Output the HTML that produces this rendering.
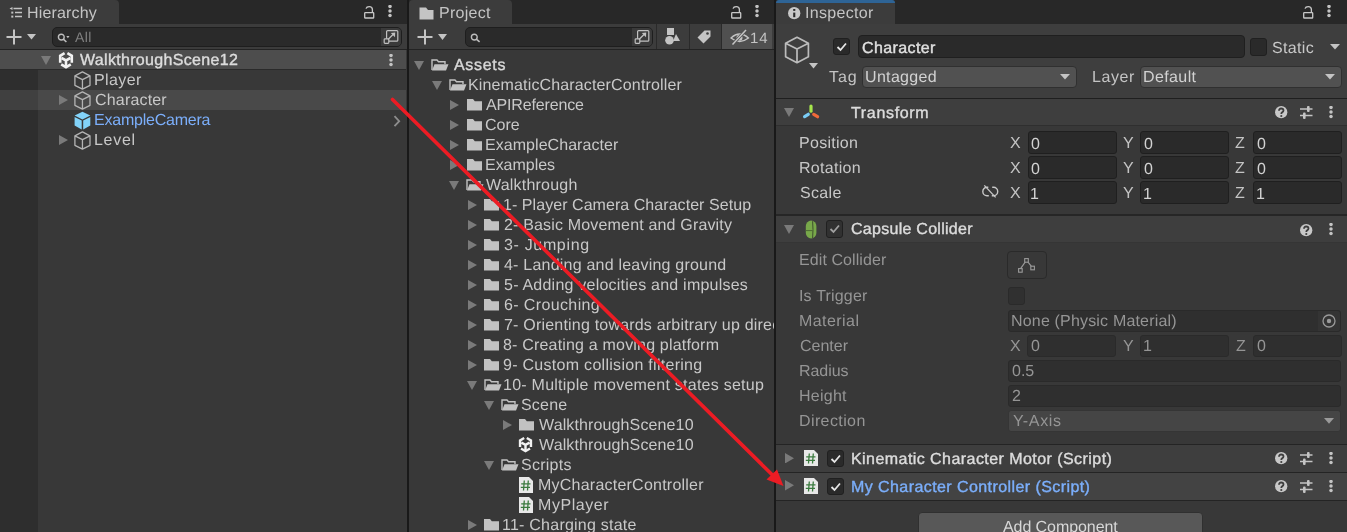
<!DOCTYPE html><html><head><meta charset="utf-8"><style>
html,body{margin:0;padding:0}
body{width:1347px;height:532px;overflow:hidden;position:relative;background:#191919;font-family:"Liberation Sans",sans-serif}
body div, body svg{position:absolute}
.t{white-space:pre;line-height:20px;font-size:16px;will-change:transform;text-rendering:geometricPrecision}
</style></head><body>
<div style="left:0px;top:0px;width:407px;height:24px;background:#282828;"></div>
<div style="left:0px;top:0px;width:119px;height:24px;background:#3c3c3c;border-top-right-radius:4px"></div>
<svg style="left:9px;top:7px;" width="14" height="11" viewBox="0 0 14 11"><path d="M4.5 1.5 H13 M6 5.5 H13 M6 9.5 H13" stroke="#c4c4c4" stroke-width="1.4"/><path d="M0.5 1.5 L3.5 0 V3 Z" fill="#c4c4c4"/><rect x="2.3" y="4.6" width="2" height="2" fill="#c4c4c4"/><rect x="2.3" y="8.6" width="2" height="2" fill="#c4c4c4"/></svg>
<div class="t" style="left:26.95px;top:3.9959999999999996px;color:#c4c4c4;font-size:16px;font-weight:400;letter-spacing:0.175px;">Hierarchy</div>
<svg style="left:363px;top:5px;" width="12" height="14" viewBox="0 0 12 14"><rect x="1.7" y="7.7" width="9" height="5.3" rx="0.6" fill="none" stroke="#c8c8c8" stroke-width="1.3"/><path d="M3 3.6 Q3.6 1.6 6.2 1.6 Q9.4 1.6 9.4 4.6 V7.7" fill="none" stroke="#c8c8c8" stroke-width="1.3"/></svg>
<svg style="left:387px;top:5px;" width="6" height="14" viewBox="0 0 6 14"><circle cx="3" cy="1.5" r="1.75" fill="#c4c4c4"/><circle cx="3" cy="6" r="1.75" fill="#c4c4c4"/><circle cx="3" cy="10.5" r="1.75" fill="#c4c4c4"/></svg>
<div style="left:0px;top:24px;width:407px;height:25px;background:#3c3c3c;"></div>
<div style="left:0px;top:49px;width:407px;height:1px;background:#232323;"></div>
<svg style="left:6px;top:29px;" width="16" height="16" viewBox="0 0 16 16"><path d="M8 0.5 V15.5 M0.5 8 H15.5" stroke="#c4c4c4" stroke-width="2"/></svg>
<svg style="left:27px;top:34px;" width="9" height="5.5" viewBox="0 0 9 5.5"><path d="M0 0 H9 L4.5 5.5 Z" fill="#c4c4c4"/></svg>
<div style="left:52px;top:27px;width:348px;height:18px;background:#2a2a2a;border:1px solid #1e1e1e;border-radius:5px"></div>
<div style="left:380.5px;top:28px;width:20.5px;height:18px;background:#3a3a3a;border-radius:0 4px 4px 0"></div>
<svg style="left:57px;top:31px;" width="14" height="13" viewBox="0 0 14 13"><circle cx="4.3" cy="6.1" r="2.9" stroke="#bdbdbd" stroke-width="1.4" fill="none"/><path d="M6.3 8.2 L9.4 11" stroke="#bdbdbd" stroke-width="1.6"/><path d="M9.3 5 H12.5 L10.9 7.2 Z" fill="#bdbdbd"/></svg>
<div class="t" style="left:75.20px;top:26.689px;color:#7f7f7f;font-size:14px;font-weight:400;letter-spacing:0.375px;">All</div>
<svg style="left:383px;top:29px;" width="17" height="16" viewBox="0 0 17 16"><rect x="3.6" y="1.6" width="11.2" height="10.6" rx="1" stroke="#c0c0c0" stroke-width="1.2" fill="none"/><rect x="1.2" y="9.8" width="4.6" height="4.6" rx="0.8" stroke="#c0c0c0" stroke-width="1.2" fill="#3b3b3b"/><path d="M5 10.5 L10 5.5" stroke="#c0c0c0" stroke-width="1.3"/><path d="M12.2 3.6 L12 8.2 L7.8 4 Z" fill="#c0c0c0"/></svg>
<div style="left:0px;top:50px;width:407px;height:482px;background:#383838;"></div>
<div style="left:0px;top:50px;width:38px;height:482px;background:#2e2e2e;"></div>
<div style="left:0px;top:50px;width:406px;height:19px;background:#4d4d4d;"></div>
<div style="left:0px;top:69px;width:406px;height:1px;background:#2a2a2a;"></div>
<svg style="left:41px;top:56px;" width="10" height="9" viewBox="0 0 10 9"><path d="M0 0 H10 L5.0 9 Z" fill="#7a7a7a"/></svg>
<svg style="left:57.5px;top:51px;" width="16" height="18" viewBox="0 0 16 18"><g transform="scale(1.0)" fill="none" stroke="#f2f2f2" stroke-width="2.6" stroke-linejoin="miter"><path d="M6.6 2.2 L2.2 4.8 V11.8"/><path d="M9.4 2.2 L13.8 4.8 V11.8"/><path d="M3.6 7 L8 9.4 L12.4 7 M8 9.4 V15"/><path d="M3.2 13.4 L8 16.2 L12.8 13.4"/></g></svg>
<div class="t" style="left:79.65px;top:50.996px;color:#dcdcdc;font-size:16px;font-weight:400;letter-spacing:0.318px;-webkit-text-stroke:0.4px #dcdcdc;">WalkthroughScene12</div>
<svg style="left:388px;top:54px;" width="6" height="14" viewBox="0 0 6 14"><circle cx="3" cy="1.5" r="1.75" fill="#c4c4c4"/><circle cx="3" cy="6" r="1.75" fill="#c4c4c4"/><circle cx="3" cy="10.5" r="1.75" fill="#c4c4c4"/></svg>
<div style="left:0px;top:90px;width:406px;height:20px;background:rgba(255,255,255,0.085);"></div>
<svg style="left:73.5px;top:70.5px;" width="17" height="19" viewBox="0 0 17 19"><path d="M8.45 0.9 L16 4.8 V14.3 L8.45 18.2 L0.9 14.3 V4.8 Z M0.9 4.8 L8.45 8.7 L16 4.8 M8.45 8.7 V18.2" stroke="#b4b4b4" stroke-width="1.3" fill="none" stroke-linejoin="round"/></svg>
<div class="t" style="left:94.05px;top:70.99600000000001px;color:#c8c8c8;font-size:16px;font-weight:400;letter-spacing:0.390px;">Player</div>
<svg style="left:59px;top:95px;" width="9" height="10" viewBox="0 0 9 10"><path d="M0 0 V10 L9 5.0 Z" fill="#7a7a7a"/></svg>
<svg style="left:73.5px;top:90.5px;" width="17" height="19" viewBox="0 0 17 19"><path d="M8.45 0.9 L16 4.8 V14.3 L8.45 18.2 L0.9 14.3 V4.8 Z M0.9 4.8 L8.45 8.7 L16 4.8 M8.45 8.7 V18.2" stroke="#b4b4b4" stroke-width="1.3" fill="none" stroke-linejoin="round"/></svg>
<div class="t" style="left:94.55px;top:90.99600000000001px;color:#c8c8c8;font-size:16px;font-weight:400;letter-spacing:0.181px;">Character</div>
<svg style="left:73.5px;top:110.5px;" width="17" height="19" viewBox="0 0 17 19"><path d="M8.45 0.7 L16.3 4.6 L8.45 8.5 L0.6 4.6 Z M0.6 5.9 L7.7 9.6 V18.6 L0.6 14.6 Z M9.2 9.6 L16.3 5.9 V14.6 L9.2 18.6 Z" fill="#82d3f9"/></svg>
<div class="t" style="left:94.05px;top:110.99600000000001px;color:#7baefa;font-size:16px;font-weight:400;letter-spacing:-0.225px;">ExampleCamera</div>
<svg style="left:393px;top:114.5px;" width="8" height="13" viewBox="0 0 8 13"><path d="M1.5 1.2 L6.2 6.2 L1.5 11.2" stroke="#8e8e8e" stroke-width="1.8" fill="none"/></svg>
<svg style="left:59px;top:135px;" width="9" height="10" viewBox="0 0 9 10"><path d="M0 0 V10 L9 5.0 Z" fill="#7a7a7a"/></svg>
<svg style="left:73.5px;top:130.5px;" width="17" height="19" viewBox="0 0 17 19"><path d="M8.45 0.9 L16 4.8 V14.3 L8.45 18.2 L0.9 14.3 V4.8 Z M0.9 4.8 L8.45 8.7 L16 4.8 M8.45 8.7 V18.2" stroke="#b4b4b4" stroke-width="1.3" fill="none" stroke-linejoin="round"/></svg>
<div class="t" style="left:94.15px;top:130.99599999999998px;color:#c8c8c8;font-size:16px;font-weight:400;letter-spacing:0.725px;">Level</div>
<div style="left:409px;top:0px;width:365px;height:24px;background:#282828;"></div>
<div style="left:409px;top:0px;width:103px;height:24px;background:#3c3c3c;border-top-left-radius:4px;border-top-right-radius:4px"></div>
<svg style="left:419px;top:6.5px;" width="15" height="13" viewBox="0 0 15 13"><path d="M0.5 0.5 H7 L9 3 H14.5 V12.5 H0.5 Z" fill="#c4c4c4"/></svg>
<div class="t" style="left:438.55px;top:3.9959999999999996px;color:#c4c4c4;font-size:16px;font-weight:400;letter-spacing:0.283px;">Project</div>
<svg style="left:730px;top:5px;" width="12" height="14" viewBox="0 0 12 14"><rect x="1.7" y="7.7" width="9" height="5.3" rx="0.6" fill="none" stroke="#c8c8c8" stroke-width="1.3"/><path d="M3 3.6 Q3.6 1.6 6.2 1.6 Q9.4 1.6 9.4 4.6 V7.7" fill="none" stroke="#c8c8c8" stroke-width="1.3"/></svg>
<svg style="left:754px;top:5px;" width="6" height="14" viewBox="0 0 6 14"><circle cx="3" cy="1.5" r="1.75" fill="#c4c4c4"/><circle cx="3" cy="6" r="1.75" fill="#c4c4c4"/><circle cx="3" cy="10.5" r="1.75" fill="#c4c4c4"/></svg>
<div style="left:409px;top:24px;width:365px;height:25px;background:#3c3c3c;"></div>
<div style="left:409px;top:49px;width:365px;height:1px;background:#232323;"></div>
<svg style="left:417px;top:29px;" width="16" height="16" viewBox="0 0 16 16"><path d="M8 0.5 V15.5 M0.5 8 H15.5" stroke="#c4c4c4" stroke-width="2"/></svg>
<svg style="left:438px;top:34px;" width="9" height="6" viewBox="0 0 9 6"><path d="M0 0 H9 L4.5 6 Z" fill="#c4c4c4"/></svg>
<div style="left:465px;top:27px;width:186px;height:18px;background:#2a2a2a;border:1px solid #1e1e1e;border-radius:5px"></div>
<div style="left:631.5px;top:28px;width:20.5px;height:18px;background:#3a3a3a;border-radius:0 4px 4px 0"></div>
<svg style="left:470px;top:31px;" width="12" height="13" viewBox="0 0 12 13"><circle cx="4.3" cy="6.1" r="2.9" stroke="#bdbdbd" stroke-width="1.4" fill="none"/><path d="M6.3 8.2 L9.6 10.9" stroke="#bdbdbd" stroke-width="1.6"/></svg>
<svg style="left:634px;top:29px;" width="17" height="16" viewBox="0 0 17 16"><rect x="3.6" y="1.6" width="11.2" height="10.6" rx="1" stroke="#c0c0c0" stroke-width="1.2" fill="none"/><rect x="1.2" y="9.8" width="4.6" height="4.6" rx="0.8" stroke="#c0c0c0" stroke-width="1.2" fill="#3b3b3b"/><path d="M5 10.5 L10 5.5" stroke="#c0c0c0" stroke-width="1.3"/><path d="M12.2 3.6 L12 8.2 L7.8 4 Z" fill="#c0c0c0"/></svg>
<div style="left:656px;top:24px;width:1px;height:25px;background:#2a2a2a;"></div>
<svg style="left:665px;top:28px;" width="16" height="17" viewBox="0 0 16 17"><rect x="2" y="0" width="7" height="7" fill="#c4c4c4"/><circle cx="4.5" cy="12.2" r="4.3" fill="#c4c4c4"/><path d="M11 6 L15 13 H8 Z" fill="#c4c4c4"/></svg>
<div style="left:689px;top:24px;width:1px;height:25px;background:#2a2a2a;"></div>
<svg style="left:697px;top:30px;" width="14" height="14" viewBox="0 0 14 14"><path d="M7.5 0.5 H13.5 V6.5 L6.5 13.5 L0.5 7.5 Z" fill="#c4c4c4"/><circle cx="10.5" cy="3.5" r="1.3" fill="#3c3c3c"/></svg>
<div style="left:721px;top:24px;width:1px;height:25px;background:#2a2a2a;"></div>
<div style="left:722px;top:24px;width:50px;height:25px;background:#505050;"></div>
<svg style="left:729.5px;top:28.5px;" width="20" height="16" viewBox="0 0 20 16"><path d="M1 9 Q9.5 1 18.5 9 Q9.5 16 1 9 Z" stroke="#c4c4c4" stroke-width="1.3" fill="none"/><circle cx="9.5" cy="8.7" r="3" fill="#c4c4c4"/><path d="M2.5 15.5 L16 1" stroke="#505050" stroke-width="3"/><path d="M2.5 15.5 L16 1" stroke="#c4c4c4" stroke-width="1.5"/></svg>
<div class="t" style="left:749.75px;top:29.342499999999998px;color:#c4c4c4;font-size:15px;font-weight:400;letter-spacing:0.800px;">14</div>
<div style="left:409px;top:50px;width:365px;height:482px;background:#383838;"></div>
<div style="left:409px;top:50px;width:365px;height:482px;overflow:hidden">
<svg style="left:5.0px;top:11px;" width="10" height="9" viewBox="0 0 10 9"><path d="M0 0 H10 L5 9 Z" fill="#7a7a7a"/></svg>
<svg style="left:22.0px;top:9px;" width="18" height="12" viewBox="0 0 18 12"><path d="M1 11 V1 H6 L7.5 2.7 H14 V5" fill="none" stroke="#c2c2c2" stroke-width="1.4"/><path d="M1 11.5 L3.5 5.2 H17.5 L15 11.5 Z" fill="#c2c2c2"/></svg>
<div class="t" style="left:44.95px;top:5.9959999999999996px;color:#d8d8d8;font-size:16px;font-weight:400;letter-spacing:0.690px;-webkit-text-stroke:0.4px #d8d8d8;">Assets</div>
<svg style="left:22.600000000000023px;top:31px;" width="10" height="9" viewBox="0 0 10 9"><path d="M0 0 H10 L5 9 Z" fill="#7a7a7a"/></svg>
<svg style="left:39.60000000000002px;top:29px;" width="18" height="12" viewBox="0 0 18 12"><path d="M1 11 V1 H6 L7.5 2.7 H14 V5" fill="none" stroke="#c2c2c2" stroke-width="1.4"/><path d="M1 11.5 L3.5 5.2 H17.5 L15 11.5 Z" fill="#c2c2c2"/></svg>
<div class="t" style="left:59.45px;top:25.996px;color:#c8c8c8;font-size:16px;font-weight:400;letter-spacing:0.144px;">KinematicCharacterController</div>
<svg style="left:41.19999999999999px;top:49.8px;" width="9" height="10" viewBox="0 0 9 10"><path d="M0 0 V10 L9 5 Z" fill="#7a7a7a"/></svg>
<svg style="left:57.599999999999966px;top:48.9px;" width="15" height="12" viewBox="0 0 15 12"><path d="M0 0 H6 L7.8 2.3 H15 V11.5 H0 Z" fill="#c2c2c2"/></svg>
<div class="t" style="left:77.10px;top:45.996px;color:#c8c8c8;font-size:16px;font-weight:400;letter-spacing:-0.155px;">APIReference</div>
<svg style="left:41.19999999999999px;top:69.8px;" width="9" height="10" viewBox="0 0 9 10"><path d="M0 0 V10 L9 5 Z" fill="#7a7a7a"/></svg>
<svg style="left:57.599999999999966px;top:68.9px;" width="15" height="12" viewBox="0 0 15 12"><path d="M0 0 H6 L7.8 2.3 H15 V11.5 H0 Z" fill="#c2c2c2"/></svg>
<div class="t" style="left:76.35px;top:65.99600000000001px;color:#c8c8c8;font-size:16px;font-weight:400;letter-spacing:0.017px;">Core</div>
<svg style="left:41.19999999999999px;top:89.8px;" width="9" height="10" viewBox="0 0 9 10"><path d="M0 0 V10 L9 5 Z" fill="#7a7a7a"/></svg>
<svg style="left:57.599999999999966px;top:88.9px;" width="15" height="12" viewBox="0 0 15 12"><path d="M0 0 H6 L7.8 2.3 H15 V11.5 H0 Z" fill="#c2c2c2"/></svg>
<div class="t" style="left:75.85px;top:85.99600000000001px;color:#c8c8c8;font-size:16px;font-weight:400;letter-spacing:0.047px;">ExampleCharacter</div>
<svg style="left:41.19999999999999px;top:109.8px;" width="9" height="10" viewBox="0 0 9 10"><path d="M0 0 V10 L9 5 Z" fill="#7a7a7a"/></svg>
<svg style="left:57.599999999999966px;top:108.9px;" width="15" height="12" viewBox="0 0 15 12"><path d="M0 0 H6 L7.8 2.3 H15 V11.5 H0 Z" fill="#c2c2c2"/></svg>
<div class="t" style="left:75.85px;top:105.99600000000001px;color:#c8c8c8;font-size:16px;font-weight:400;letter-spacing:-0.029px;">Examples</div>
<svg style="left:40.19999999999999px;top:131px;" width="10" height="9" viewBox="0 0 10 9"><path d="M0 0 H10 L5 9 Z" fill="#7a7a7a"/></svg>
<svg style="left:57.19999999999999px;top:129px;" width="18" height="12" viewBox="0 0 18 12"><path d="M1 11 V1 H6 L7.5 2.7 H14 V5" fill="none" stroke="#c2c2c2" stroke-width="1.4"/><path d="M1 11.5 L3.5 5.2 H17.5 L15 11.5 Z" fill="#c2c2c2"/></svg>
<div class="t" style="left:77.10px;top:125.99600000000001px;color:#c8c8c8;font-size:16px;font-weight:400;letter-spacing:0.205px;">Walkthrough</div>
<svg style="left:58.69999999999999px;top:149.8px;" width="9" height="10" viewBox="0 0 9 10"><path d="M0 0 V10 L9 5 Z" fill="#7a7a7a"/></svg>
<svg style="left:74.94999999999999px;top:148.9px;" width="15" height="12" viewBox="0 0 15 12"><path d="M0 0 H6 L7.8 2.3 H15 V11.5 H0 Z" fill="#c2c2c2"/></svg>
<div class="t" style="left:94.25px;top:145.99599999999998px;color:#c8c8c8;font-size:16px;font-weight:400;letter-spacing:0.055px;">1- Player Camera Character Setup</div>
<svg style="left:58.69999999999999px;top:169.8px;" width="9" height="10" viewBox="0 0 9 10"><path d="M0 0 V10 L9 5 Z" fill="#7a7a7a"/></svg>
<svg style="left:74.94999999999999px;top:168.9px;" width="15" height="12" viewBox="0 0 15 12"><path d="M0 0 H6 L7.8 2.3 H15 V11.5 H0 Z" fill="#c2c2c2"/></svg>
<div class="t" style="left:94.75px;top:165.99599999999998px;color:#c8c8c8;font-size:16px;font-weight:400;letter-spacing:0.170px;">2- Basic Movement and Gravity</div>
<svg style="left:58.69999999999999px;top:189.8px;" width="9" height="10" viewBox="0 0 9 10"><path d="M0 0 V10 L9 5 Z" fill="#7a7a7a"/></svg>
<svg style="left:74.94999999999999px;top:188.9px;" width="15" height="12" viewBox="0 0 15 12"><path d="M0 0 H6 L7.8 2.3 H15 V11.5 H0 Z" fill="#c2c2c2"/></svg>
<div class="t" style="left:94.75px;top:185.99599999999998px;color:#c8c8c8;font-size:16px;font-weight:400;letter-spacing:0.661px;">3- Jumping</div>
<svg style="left:58.69999999999999px;top:209.8px;" width="9" height="10" viewBox="0 0 9 10"><path d="M0 0 V10 L9 5 Z" fill="#7a7a7a"/></svg>
<svg style="left:74.94999999999999px;top:208.9px;" width="15" height="12" viewBox="0 0 15 12"><path d="M0 0 H6 L7.8 2.3 H15 V11.5 H0 Z" fill="#c2c2c2"/></svg>
<div class="t" style="left:95.25px;top:205.99599999999998px;color:#c8c8c8;font-size:16px;font-weight:400;letter-spacing:0.216px;">4- Landing and leaving ground</div>
<svg style="left:58.69999999999999px;top:229.8px;" width="9" height="10" viewBox="0 0 9 10"><path d="M0 0 V10 L9 5 Z" fill="#7a7a7a"/></svg>
<svg style="left:74.94999999999999px;top:228.9px;" width="15" height="12" viewBox="0 0 15 12"><path d="M0 0 H6 L7.8 2.3 H15 V11.5 H0 Z" fill="#c2c2c2"/></svg>
<div class="t" style="left:94.75px;top:225.99599999999998px;color:#c8c8c8;font-size:16px;font-weight:400;letter-spacing:0.227px;">5- Adding velocities and impulses</div>
<svg style="left:58.69999999999999px;top:249.8px;" width="9" height="10" viewBox="0 0 9 10"><path d="M0 0 V10 L9 5 Z" fill="#7a7a7a"/></svg>
<svg style="left:74.94999999999999px;top:248.9px;" width="15" height="12" viewBox="0 0 15 12"><path d="M0 0 H6 L7.8 2.3 H15 V11.5 H0 Z" fill="#c2c2c2"/></svg>
<div class="t" style="left:94.75px;top:245.99599999999998px;color:#c8c8c8;font-size:16px;font-weight:400;letter-spacing:0.377px;">6- Crouching</div>
<svg style="left:58.69999999999999px;top:269.8px;" width="9" height="10" viewBox="0 0 9 10"><path d="M0 0 V10 L9 5 Z" fill="#7a7a7a"/></svg>
<svg style="left:74.94999999999999px;top:268.9px;" width="15" height="12" viewBox="0 0 15 12"><path d="M0 0 H6 L7.8 2.3 H15 V11.5 H0 Z" fill="#c2c2c2"/></svg>
<div class="t" style="left:94.75px;top:265.99600000000004px;color:#c8c8c8;font-size:16px;font-weight:400;letter-spacing:0.200px;">7- Orienting towards arbitrary up direction</div>
<svg style="left:58.69999999999999px;top:289.8px;" width="9" height="10" viewBox="0 0 9 10"><path d="M0 0 V10 L9 5 Z" fill="#7a7a7a"/></svg>
<svg style="left:74.94999999999999px;top:288.9px;" width="15" height="12" viewBox="0 0 15 12"><path d="M0 0 H6 L7.8 2.3 H15 V11.5 H0 Z" fill="#c2c2c2"/></svg>
<div class="t" style="left:94.45px;top:285.99600000000004px;color:#c8c8c8;font-size:16px;font-weight:400;letter-spacing:0.186px;">8- Creating a moving platform</div>
<svg style="left:58.69999999999999px;top:309.8px;" width="9" height="10" viewBox="0 0 9 10"><path d="M0 0 V10 L9 5 Z" fill="#7a7a7a"/></svg>
<svg style="left:74.94999999999999px;top:308.9px;" width="15" height="12" viewBox="0 0 15 12"><path d="M0 0 H6 L7.8 2.3 H15 V11.5 H0 Z" fill="#c2c2c2"/></svg>
<div class="t" style="left:94.45px;top:305.99600000000004px;color:#c8c8c8;font-size:16px;font-weight:400;letter-spacing:0.286px;">9- Custom collision filtering</div>
<svg style="left:57.80000000000001px;top:331px;" width="10" height="9" viewBox="0 0 10 9"><path d="M0 0 H10 L5 9 Z" fill="#7a7a7a"/></svg>
<svg style="left:74.80000000000001px;top:329px;" width="18" height="12" viewBox="0 0 18 12"><path d="M1 11 V1 H6 L7.5 2.7 H14 V5" fill="none" stroke="#c2c2c2" stroke-width="1.4"/><path d="M1 11.5 L3.5 5.2 H17.5 L15 11.5 Z" fill="#c2c2c2"/></svg>
<div class="t" style="left:93.95px;top:325.99600000000004px;color:#c8c8c8;font-size:16px;font-weight:400;letter-spacing:0.250px;">10- Multiple movement states setup</div>
<svg style="left:75.39999999999998px;top:351px;" width="10" height="9" viewBox="0 0 10 9"><path d="M0 0 H10 L5 9 Z" fill="#7a7a7a"/></svg>
<svg style="left:92.39999999999998px;top:349px;" width="18" height="12" viewBox="0 0 18 12"><path d="M1 11 V1 H6 L7.5 2.7 H14 V5" fill="none" stroke="#c2c2c2" stroke-width="1.4"/><path d="M1 11.5 L3.5 5.2 H17.5 L15 11.5 Z" fill="#c2c2c2"/></svg>
<div class="t" style="left:111.55px;top:345.99600000000004px;color:#c8c8c8;font-size:16px;font-weight:400;letter-spacing:0.200px;">Scene</div>
<svg style="left:93.69999999999999px;top:369.8px;" width="9" height="10" viewBox="0 0 9 10"><path d="M0 0 V10 L9 5 Z" fill="#7a7a7a"/></svg>
<svg style="left:109.64999999999998px;top:368.9px;" width="15" height="12" viewBox="0 0 15 12"><path d="M0 0 H6 L7.8 2.3 H15 V11.5 H0 Z" fill="#c2c2c2"/></svg>
<div class="t" style="left:130.10px;top:365.99600000000004px;color:#c8c8c8;font-size:16px;font-weight:400;letter-spacing:0.126px;">WalkthroughScene10</div>
<svg style="left:109.14999999999998px;top:386.2px;" width="15" height="17" viewBox="0 0 15 17"><g transform="scale(0.9375)" fill="none" stroke="#f2f2f2" stroke-width="2.6" stroke-linejoin="miter"><path d="M6.6 2.2 L2.2 4.8 V11.8"/><path d="M9.4 2.2 L13.8 4.8 V11.8"/><path d="M3.6 7 L8 9.4 L12.4 7 M8 9.4 V15"/><path d="M3.2 13.4 L8 16.2 L12.8 13.4"/></g></svg>
<div class="t" style="left:130.10px;top:385.99600000000004px;color:#c8c8c8;font-size:16px;font-weight:400;letter-spacing:0.126px;">WalkthroughScene10</div>
<svg style="left:75.39999999999998px;top:411px;" width="10" height="9" viewBox="0 0 10 9"><path d="M0 0 H10 L5 9 Z" fill="#7a7a7a"/></svg>
<svg style="left:92.39999999999998px;top:409px;" width="18" height="12" viewBox="0 0 18 12"><path d="M1 11 V1 H6 L7.5 2.7 H14 V5" fill="none" stroke="#c2c2c2" stroke-width="1.4"/><path d="M1 11.5 L3.5 5.2 H17.5 L15 11.5 Z" fill="#c2c2c2"/></svg>
<div class="t" style="left:111.55px;top:405.99600000000004px;color:#c8c8c8;font-size:16px;font-weight:400;letter-spacing:0.250px;">Scripts</div>
<svg style="left:108.64999999999998px;top:425.5px;" width="16" height="18" viewBox="0 0 16 18"><path d="M1 1 H11 L15 5 V17 H1 Z" fill="#e8e8e8"/><path d="M6.3 4.5 L5.5 14.5 M10.3 4.5 L9.5 14.5 M3.2 7.8 H12.5 M2.8 11.3 H12" stroke="#3a7a3e" stroke-width="1.3"/></svg>
<div class="t" style="left:128.85px;top:425.99600000000004px;color:#c8c8c8;font-size:16px;font-weight:400;letter-spacing:0.230px;">MyCharacterController</div>
<svg style="left:108.64999999999998px;top:445.5px;" width="16" height="18" viewBox="0 0 16 18"><path d="M1 1 H11 L15 5 V17 H1 Z" fill="#e8e8e8"/><path d="M6.3 4.5 L5.5 14.5 M10.3 4.5 L9.5 14.5 M3.2 7.8 H12.5 M2.8 11.3 H12" stroke="#3a7a3e" stroke-width="1.3"/></svg>
<div class="t" style="left:128.85px;top:445.99600000000004px;color:#c8c8c8;font-size:16px;font-weight:400;letter-spacing:0.564px;">MyPlayer</div>
<svg style="left:58.69999999999999px;top:469.8px;" width="9" height="10" viewBox="0 0 9 10"><path d="M0 0 V10 L9 5 Z" fill="#7a7a7a"/></svg>
<svg style="left:74.94999999999999px;top:468.9px;" width="15" height="12" viewBox="0 0 15 12"><path d="M0 0 H6 L7.8 2.3 H15 V11.5 H0 Z" fill="#c2c2c2"/></svg>
<div class="t" style="left:93.25px;top:465.99600000000004px;color:#c8c8c8;font-size:16px;font-weight:400;letter-spacing:0.235px;">11- Charging state</div>
</div>
<div style="left:776px;top:0px;width:571px;height:24px;background:#282828;"></div>
<div style="left:776px;top:0px;width:119px;height:24px;background:#3c3c3c;border-top-left-radius:4px;border-top-right-radius:4px;overflow:hidden"></div>
<div style="left:776px;top:0px;width:119px;height:3px;background:#2e6496;border-top-left-radius:4px;border-top-right-radius:4px"></div>
<svg style="left:787.5px;top:6.5px;" width="13" height="13" viewBox="0 0 13 13"><circle cx="6.2" cy="6.2" r="6.15" fill="#c8c8c8"/><rect x="5.2" y="2" width="2.1" height="1.9" fill="#2a2a2a"/><rect x="5.2" y="5.6" width="2.1" height="4.6" fill="#2a2a2a"/></svg>
<div class="t" style="left:804.80px;top:3.9959999999999996px;color:#c4c4c4;font-size:16px;font-weight:400;letter-spacing:0.325px;">Inspector</div>
<svg style="left:1302px;top:5px;" width="12" height="14" viewBox="0 0 12 14"><rect x="1.7" y="7.7" width="9" height="5.3" rx="0.6" fill="none" stroke="#c8c8c8" stroke-width="1.3"/><path d="M3 3.6 Q3.6 1.6 6.2 1.6 Q9.4 1.6 9.4 4.6 V7.7" fill="none" stroke="#c8c8c8" stroke-width="1.3"/></svg>
<svg style="left:1326px;top:5px;" width="6" height="14" viewBox="0 0 6 14"><circle cx="3" cy="1.5" r="1.75" fill="#c4c4c4"/><circle cx="3" cy="6" r="1.75" fill="#c4c4c4"/><circle cx="3" cy="10.5" r="1.75" fill="#c4c4c4"/></svg>
<div style="left:776px;top:24px;width:571px;height:74px;background:#3e3e3e;"></div>
<div style="left:776px;top:98px;width:571px;height:1px;background:#1f1f1f;"></div>
<svg style="left:784px;top:36px;" width="27" height="28" viewBox="0 0 27 28"><path d="M13 1.3 L24.4 7.2 V20.8 L13 26.7 L1.6 20.8 V7.2 Z M1.6 7.2 L13 13.1 L24.4 7.2 M13 13.1 V26.7" stroke="#bcbcbc" stroke-width="1.7" fill="none" stroke-linejoin="round"/></svg>
<svg style="left:809px;top:63px;" width="9" height="5.5" viewBox="0 0 9 5.5"><path d="M0 0 H9 L4.5 5.5 Z" fill="#c4c4c4"/></svg>
<div style="left:833px;top:38px;width:15px;height:15px;background:#2a2a2a;border:1px solid #202020;border-radius:3px"></div>
<svg style="left:836px;top:41px;" width="11" height="11" viewBox="0 0 11 11"><path d="M1.5 6 L4.5 9 L10 2.5" stroke="#e6e6e6" stroke-width="1.8" fill="none"/></svg>
<div style="left:858px;top:35px;width:384.5px;height:21px;background:#2a2a2a;border:1px solid #1f1f1f;border-radius:4px"></div>
<div class="t" style="left:861.90px;top:38.996px;color:#e0e0e0;font-size:16px;font-weight:400;letter-spacing:0.394px;-webkit-text-stroke:0.4px #e0e0e0;">Character</div>
<div style="left:1250px;top:38px;width:15px;height:16px;background:#2a2a2a;border:1px solid #202020;border-radius:3px"></div>
<div class="t" style="left:1271.55px;top:38.996px;color:#c8c8c8;font-size:16px;font-weight:400;letter-spacing:0.350px;">Static</div>
<svg style="left:1329.5px;top:44px;" width="10" height="5.5" viewBox="0 0 10 5.5"><path d="M0 0 H10 L5.0 5.5 Z" fill="#c4c4c4"/></svg>
<div class="t" style="left:828.75px;top:67.99600000000001px;color:#c4c4c4;font-size:16px;font-weight:400;letter-spacing:0.900px;">Tag</div>
<div style="left:861.5px;top:65.5px;width:213.5px;height:20px;background:#515151;border:1px solid #303030;border-radius:4px"></div>
<div class="t" style="left:864.95px;top:67.99600000000001px;color:#d2d2d2;font-size:16px;font-weight:400;letter-spacing:0.329px;">Untagged</div>
<svg style="left:1060px;top:74px;" width="10" height="5.5" viewBox="0 0 10 5.5"><path d="M0 0 H10 L5.0 5.5 Z" fill="#c4c4c4"/></svg>
<div class="t" style="left:1091.75px;top:67.99600000000001px;color:#c4c4c4;font-size:16px;font-weight:400;letter-spacing:0.575px;">Layer</div>
<div style="left:1140px;top:65.5px;width:199.5px;height:20px;background:#515151;border:1px solid #303030;border-radius:4px"></div>
<div class="t" style="left:1143.15px;top:67.99600000000001px;color:#d2d2d2;font-size:16px;font-weight:400;letter-spacing:0.392px;">Default</div>
<svg style="left:1324.5px;top:74px;" width="10" height="5.5" viewBox="0 0 10 5.5"><path d="M0 0 H10 L5.0 5.5 Z" fill="#c4c4c4"/></svg>
<div style="left:776px;top:99px;width:571px;height:433px;background:#383838;"></div>
<div style="left:776px;top:99px;width:571px;height:26px;background:#3e3e3e;"></div>
<div style="left:776px;top:125px;width:571px;height:1px;background:#2f2f2f;"></div>
<svg style="left:784px;top:108px;" width="10" height="9" viewBox="0 0 10 9"><path d="M0 0 H10 L5.0 9 Z" fill="#7a7a7a"/></svg>
<svg style="left:802px;top:103px;" width="18" height="17" viewBox="0 0 18 17"><path d="M9 3 V8.2" stroke="#a6e64c" stroke-width="3.2" stroke-linecap="round"/><path d="M6.3 11.3 L2.6 13.6" stroke="#7accf5" stroke-width="3.2" stroke-linecap="round"/><path d="M11.7 11.4 L15.6 13.7" stroke="#f06a3a" stroke-width="3.2" stroke-linecap="round"/></svg>
<div class="t" style="left:851.35px;top:103.99600000000001px;color:#dcdcdc;font-size:16px;font-weight:400;letter-spacing:0.669px;-webkit-text-stroke:0.4px #dcdcdc;">Transform</div>
<svg style="left:1275px;top:106px;" width="13" height="13" viewBox="0 0 13 13"><circle cx="6.2" cy="6.2" r="6.15" fill="#c8c8c8"/><path d="M4 4.8 Q4 2.5 6.2 2.5 Q8.5 2.5 8.5 4.5 Q8.5 5.7 7.1 6.4 Q6.3 6.8 6.3 8" stroke="#3e3e3e" stroke-width="1.8" fill="none"/><circle cx="6.3" cy="10" r="1.1" fill="#3e3e3e"/></svg>
<svg style="left:1300px;top:106px;" width="13" height="13" viewBox="0 0 13 13"><path d="M0 3 H12.5 M0 9.5 H12.5" stroke="#c4c4c4" stroke-width="1.5"/><rect x="7" y="0" width="2.6" height="6" rx="1" fill="#c4c4c4"/><rect x="3" y="6.5" width="2.6" height="6.5" rx="1" fill="#c4c4c4"/></svg>
<svg style="left:1328px;top:105.5px;" width="6" height="14" viewBox="0 0 6 14"><circle cx="3" cy="1.5" r="1.75" fill="#c4c4c4"/><circle cx="3" cy="6" r="1.75" fill="#c4c4c4"/><circle cx="3" cy="10.5" r="1.75" fill="#c4c4c4"/></svg>
<div class="t" style="left:799.25px;top:133.99599999999998px;color:#c8c8c8;font-size:16px;font-weight:400;letter-spacing:0.286px;">Position</div>
<div class="t" style="left:1009.50px;top:133.99599999999998px;color:#c4c4c4;font-size:16px;font-weight:400;letter-spacing:0.000px;">X</div>
<div style="left:1027.5px;top:131px;width:87px;height:21px;background:#2a2a2a;border:1px solid #1f1f1f;border-radius:3px"></div>
<div class="t" style="left:1031.00px;top:134.99599999999998px;color:#d2d2d2;font-size:16px;font-weight:400;letter-spacing:0.000px;">0</div>
<div class="t" style="left:1122.50px;top:133.99599999999998px;color:#c4c4c4;font-size:16px;font-weight:400;letter-spacing:0.000px;">Y</div>
<div style="left:1140px;top:131px;width:87px;height:21px;background:#2a2a2a;border:1px solid #1f1f1f;border-radius:3px"></div>
<div class="t" style="left:1143.50px;top:134.99599999999998px;color:#d2d2d2;font-size:16px;font-weight:400;letter-spacing:0.000px;">0</div>
<div class="t" style="left:1235.00px;top:133.99599999999998px;color:#c4c4c4;font-size:16px;font-weight:400;letter-spacing:0.000px;">Z</div>
<div style="left:1253px;top:131px;width:87px;height:21px;background:#2a2a2a;border:1px solid #1f1f1f;border-radius:3px"></div>
<div class="t" style="left:1256.50px;top:134.99599999999998px;color:#d2d2d2;font-size:16px;font-weight:400;letter-spacing:0.000px;">0</div>
<div class="t" style="left:799.25px;top:158.99599999999998px;color:#c8c8c8;font-size:16px;font-weight:400;letter-spacing:0.279px;">Rotation</div>
<div class="t" style="left:1009.50px;top:158.99599999999998px;color:#c4c4c4;font-size:16px;font-weight:400;letter-spacing:0.000px;">X</div>
<div style="left:1027.5px;top:156px;width:87px;height:21px;background:#2a2a2a;border:1px solid #1f1f1f;border-radius:3px"></div>
<div class="t" style="left:1031.00px;top:159.99599999999998px;color:#d2d2d2;font-size:16px;font-weight:400;letter-spacing:0.000px;">0</div>
<div class="t" style="left:1122.50px;top:158.99599999999998px;color:#c4c4c4;font-size:16px;font-weight:400;letter-spacing:0.000px;">Y</div>
<div style="left:1140px;top:156px;width:87px;height:21px;background:#2a2a2a;border:1px solid #1f1f1f;border-radius:3px"></div>
<div class="t" style="left:1143.50px;top:159.99599999999998px;color:#d2d2d2;font-size:16px;font-weight:400;letter-spacing:0.000px;">0</div>
<div class="t" style="left:1235.00px;top:158.99599999999998px;color:#c4c4c4;font-size:16px;font-weight:400;letter-spacing:0.000px;">Z</div>
<div style="left:1253px;top:156px;width:87px;height:21px;background:#2a2a2a;border:1px solid #1f1f1f;border-radius:3px"></div>
<div class="t" style="left:1256.50px;top:159.99599999999998px;color:#d2d2d2;font-size:16px;font-weight:400;letter-spacing:0.000px;">0</div>
<div class="t" style="left:799.75px;top:183.99599999999998px;color:#c8c8c8;font-size:16px;font-weight:400;letter-spacing:0.325px;">Scale</div>
<div class="t" style="left:1009.50px;top:183.99599999999998px;color:#c4c4c4;font-size:16px;font-weight:400;letter-spacing:0.000px;">X</div>
<div style="left:1027.5px;top:181px;width:87px;height:21px;background:#2a2a2a;border:1px solid #1f1f1f;border-radius:3px"></div>
<div class="t" style="left:1030.25px;top:184.99599999999998px;color:#d2d2d2;font-size:16px;font-weight:400;letter-spacing:0.000px;">1</div>
<div class="t" style="left:1122.50px;top:183.99599999999998px;color:#c4c4c4;font-size:16px;font-weight:400;letter-spacing:0.000px;">Y</div>
<div style="left:1140px;top:181px;width:87px;height:21px;background:#2a2a2a;border:1px solid #1f1f1f;border-radius:3px"></div>
<div class="t" style="left:1142.75px;top:184.99599999999998px;color:#d2d2d2;font-size:16px;font-weight:400;letter-spacing:0.000px;">1</div>
<div class="t" style="left:1235.00px;top:183.99599999999998px;color:#c4c4c4;font-size:16px;font-weight:400;letter-spacing:0.000px;">Z</div>
<div style="left:1253px;top:181px;width:87px;height:21px;background:#2a2a2a;border:1px solid #1f1f1f;border-radius:3px"></div>
<div class="t" style="left:1255.75px;top:184.99599999999998px;color:#d2d2d2;font-size:16px;font-weight:400;letter-spacing:0.000px;">1</div>
<svg style="left:982px;top:184px;" width="17" height="15" viewBox="0 0 17 15"><path d="M6.3 3.3 H5 A4.2 4.2 0 0 0 5 11.7 H6.8 M10.2 3.3 H11.5 A4.2 4.2 0 0 1 11.5 11.7 H9.8" stroke="#c8c8c8" stroke-width="1.4" fill="none"/><path d="M2.3 1.4 L13.6 13.4" stroke="#c8c8c8" stroke-width="1.3"/></svg>
<div style="left:776px;top:214px;width:571px;height:2px;background:#262626;"></div>
<div style="left:776px;top:216px;width:571px;height:26px;background:#3e3e3e;"></div>
<div style="left:776px;top:242px;width:571px;height:1px;background:#353535;"></div>
<svg style="left:784px;top:224.8px;" width="10" height="9" viewBox="0 0 10 9"><path d="M0 0 H10 L5.0 9 Z" fill="#7a7a7a"/></svg>
<svg style="left:805px;top:219.5px;" width="12" height="19" viewBox="0 0 12 19"><rect x="0.8" y="0.6" width="10.6" height="17.8" rx="5.3" fill="#78a84a"/><path d="M7.6 1.2 Q8.4 9.5 7.6 18" stroke="#3d4f2c" stroke-width="1" fill="none"/><path d="M0.8 10.6 H7.6" stroke="#4d6a32" stroke-width="1"/></svg>
<div style="left:826px;top:220px;width:15px;height:16px;background:#313131;border:1px solid #202020;border-radius:3px"></div>
<svg style="left:829px;top:223px;" width="11" height="12" viewBox="0 0 11 12"><path d="M1.5 6 L4.5 9 L10 2.5" stroke="#a0a0a0" stroke-width="1.8" fill="none"/></svg>
<div class="t" style="left:851.10px;top:219.99599999999998px;color:#dcdcdc;font-size:16px;font-weight:400;letter-spacing:0.277px;-webkit-text-stroke:0.4px #dcdcdc;">Capsule Collider</div>
<svg style="left:1300px;top:223.5px;" width="13" height="13" viewBox="0 0 13 13"><circle cx="6.2" cy="6.2" r="6.15" fill="#c8c8c8"/><path d="M4 4.8 Q4 2.5 6.2 2.5 Q8.5 2.5 8.5 4.5 Q8.5 5.7 7.1 6.4 Q6.3 6.8 6.3 8" stroke="#3e3e3e" stroke-width="1.8" fill="none"/><circle cx="6.3" cy="10" r="1.1" fill="#3e3e3e"/></svg>
<svg style="left:1328px;top:222.5px;" width="6" height="14" viewBox="0 0 6 14"><circle cx="3" cy="1.5" r="1.75" fill="#c4c4c4"/><circle cx="3" cy="6" r="1.75" fill="#c4c4c4"/><circle cx="3" cy="10.5" r="1.75" fill="#c4c4c4"/></svg>
<div class="t" style="left:799.15px;top:251.49599999999998px;color:#959595;font-size:16px;font-weight:400;letter-spacing:0.088px;">Edit Collider</div>
<div style="left:1007px;top:251px;width:38px;height:26px;background:#383838;border:1px solid #2a2a2a;border-radius:4px"></div>
<svg style="left:1017px;top:257px;" width="20" height="17" viewBox="0 0 20 17"><path d="M3.4 11.8 L9.5 3.2 L15.6 10.8" stroke="#9a9a9a" stroke-width="1.2" fill="none"/><rect x="1.6" y="11.6" width="3.6" height="3.6" stroke="#9a9a9a" stroke-width="1.1" fill="#383838"/><rect x="7.7" y="1.6" width="3.6" height="3.6" stroke="#9a9a9a" stroke-width="1.1" fill="#383838"/><rect x="13.8" y="9.2" width="3.6" height="3.6" stroke="#9a9a9a" stroke-width="1.1" fill="#383838"/></svg>
<div class="t" style="left:798.90px;top:286.99600000000004px;color:#959595;font-size:16px;font-weight:400;letter-spacing:0.178px;">Is Trigger</div>
<div style="left:1008px;top:287px;width:15px;height:16px;background:#303030;border:1px solid #2a2a2a;border-radius:3px"></div>
<div class="t" style="left:799.15px;top:312.49600000000004px;color:#959595;font-size:16px;font-weight:400;letter-spacing:0.443px;">Material</div>
<div style="left:1008px;top:309.5px;width:331px;height:20px;background:#2f2f2f;border:1px solid #2a2a2a;border-radius:3px"></div>
<div class="t" style="left:1011.15px;top:312.49600000000004px;color:#959595;font-size:16px;font-weight:400;letter-spacing:0.176px;">None (Physic Material)</div>
<div style="left:1318px;top:310.5px;width:22px;height:20px;background:#343434;border-radius:0 3px 3px 0"></div>
<svg style="left:1321px;top:313px;" width="16" height="16" viewBox="0 0 16 16"><circle cx="8" cy="8" r="6" stroke="#9a9a9a" stroke-width="1.3" fill="none"/><circle cx="8" cy="8" r="2.2" fill="#9a9a9a"/></svg>
<div class="t" style="left:799.65px;top:337.49600000000004px;color:#959595;font-size:16px;font-weight:400;letter-spacing:0.000px;">Center</div>
<div class="t" style="left:1010.00px;top:337.49600000000004px;color:#959595;font-size:16px;font-weight:400;letter-spacing:0.000px;">X</div>
<div style="left:1027px;top:334.5px;width:87px;height:20px;background:#2f2f2f;border:1px solid #2a2a2a;border-radius:3px"></div>
<div class="t" style="left:1031.00px;top:337.49600000000004px;color:#959595;font-size:16px;font-weight:400;letter-spacing:0.000px;">0</div>
<div class="t" style="left:1123.00px;top:337.49600000000004px;color:#959595;font-size:16px;font-weight:400;letter-spacing:0.000px;">Y</div>
<div style="left:1140px;top:334.5px;width:87px;height:20px;background:#2f2f2f;border:1px solid #2a2a2a;border-radius:3px"></div>
<div class="t" style="left:1143.25px;top:337.49600000000004px;color:#959595;font-size:16px;font-weight:400;letter-spacing:0.000px;">1</div>
<div class="t" style="left:1236.00px;top:337.49600000000004px;color:#959595;font-size:16px;font-weight:400;letter-spacing:0.000px;">Z</div>
<div style="left:1253px;top:334.5px;width:87px;height:20px;background:#2f2f2f;border:1px solid #2a2a2a;border-radius:3px"></div>
<div class="t" style="left:1257.00px;top:337.49600000000004px;color:#959595;font-size:16px;font-weight:400;letter-spacing:0.000px;">0</div>
<div class="t" style="left:799.15px;top:361.99600000000004px;color:#959595;font-size:16px;font-weight:400;letter-spacing:-0.040px;">Radius</div>
<div style="left:1008px;top:359.5px;width:331px;height:20px;background:#2f2f2f;border:1px solid #2a2a2a;border-radius:3px"></div>
<div class="t" style="left:1012.00px;top:361.99600000000004px;color:#959595;font-size:16px;font-weight:400;letter-spacing:0.000px;">0.5</div>
<div class="t" style="left:799.15px;top:386.99600000000004px;color:#959595;font-size:16px;font-weight:400;letter-spacing:0.260px;">Height</div>
<div style="left:1008px;top:384.5px;width:331px;height:20px;background:#2f2f2f;border:1px solid #2a2a2a;border-radius:3px"></div>
<div class="t" style="left:1011.75px;top:386.99600000000004px;color:#959595;font-size:16px;font-weight:400;letter-spacing:0.000px;">2</div>
<div class="t" style="left:799.15px;top:411.99600000000004px;color:#959595;font-size:16px;font-weight:400;letter-spacing:0.394px;">Direction</div>
<div style="left:1008px;top:409.5px;width:331px;height:20px;background:#454545;border:1px solid #353535;border-radius:3px"></div>
<div class="t" style="left:1012.70px;top:411.99600000000004px;color:#959595;font-size:16px;font-weight:400;letter-spacing:0.650px;">Y-Axis</div>
<svg style="left:1324.3px;top:418px;" width="10" height="5.8" viewBox="0 0 10 5.8"><path d="M0 0 H10 L5.0 5.8 Z" fill="#9a9a9a"/></svg>
<div style="left:776px;top:444px;width:571px;height:1px;background:#242424;"></div>
<div style="left:776px;top:445px;width:571px;height:27px;background:#3e3e3e;"></div>
<div style="left:776px;top:472px;width:571px;height:1px;background:#242424;"></div>
<svg style="left:785px;top:452.5px;" width="9" height="10.5" viewBox="0 0 9 10.5"><path d="M0 0 V10.5 L9 5.25 Z" fill="#7a7a7a"/></svg>
<svg style="left:803px;top:449px;" width="16" height="18" viewBox="0 0 16 18"><path d="M1 1 H11 L15 5 V17 H1 Z" fill="#e8e8e8"/><path d="M6.3 4.5 L5.5 14.5 M10.3 4.5 L9.5 14.5 M3.2 7.8 H12.5 M2.8 11.3 H12" stroke="#3a7a3e" stroke-width="1.3"/></svg>
<div style="left:826.5px;top:449.5px;width:15px;height:15px;background:#2a2a2a;border:1px solid #202020;border-radius:3px"></div>
<svg style="left:829.5px;top:452.5px;" width="11" height="11" viewBox="0 0 11 11"><path d="M1.5 6 L4.5 9 L10 2.5" stroke="#e6e6e6" stroke-width="1.8" fill="none"/></svg>
<div class="t" style="left:850.80px;top:450.49600000000004px;color:#dcdcdc;font-size:16px;font-weight:400;letter-spacing:0.442px;-webkit-text-stroke:0.4px #dcdcdc;">Kinematic Character Motor (Script)</div>
<svg style="left:1275px;top:452px;" width="13" height="13" viewBox="0 0 13 13"><circle cx="6.2" cy="6.2" r="6.15" fill="#c8c8c8"/><path d="M4 4.8 Q4 2.5 6.2 2.5 Q8.5 2.5 8.5 4.5 Q8.5 5.7 7.1 6.4 Q6.3 6.8 6.3 8" stroke="#3e3e3e" stroke-width="1.8" fill="none"/><circle cx="6.3" cy="10" r="1.1" fill="#3e3e3e"/></svg>
<svg style="left:1300px;top:452px;" width="13" height="13" viewBox="0 0 13 13"><path d="M0 3 H12.5 M0 9.5 H12.5" stroke="#c4c4c4" stroke-width="1.5"/><rect x="7" y="0" width="2.6" height="6" rx="1" fill="#c4c4c4"/><rect x="3" y="6.5" width="2.6" height="6.5" rx="1" fill="#c4c4c4"/></svg>
<svg style="left:1328px;top:451.5px;" width="6" height="14" viewBox="0 0 6 14"><circle cx="3" cy="1.5" r="1.75" fill="#c4c4c4"/><circle cx="3" cy="6" r="1.75" fill="#c4c4c4"/><circle cx="3" cy="10.5" r="1.75" fill="#c4c4c4"/></svg>
<div style="left:776px;top:473px;width:571px;height:27px;background:#434343;"></div>
<div style="left:776px;top:500px;width:571px;height:1px;background:#242424;"></div>
<svg style="left:785px;top:480.4px;" width="9" height="10.5" viewBox="0 0 9 10.5"><path d="M0 0 V10.5 L9 5.25 Z" fill="#7a7a7a"/></svg>
<svg style="left:803px;top:477px;" width="16" height="18" viewBox="0 0 16 18"><path d="M1 1 H11 L15 5 V17 H1 Z" fill="#e8e8e8"/><path d="M6.3 4.5 L5.5 14.5 M10.3 4.5 L9.5 14.5 M3.2 7.8 H12.5 M2.8 11.3 H12" stroke="#3a7a3e" stroke-width="1.3"/></svg>
<div style="left:826.5px;top:477.5px;width:15px;height:15px;background:#2a2a2a;border:1px solid #202020;border-radius:3px"></div>
<svg style="left:829.5px;top:480.5px;" width="11" height="11" viewBox="0 0 11 11"><path d="M1.5 6 L4.5 9 L10 2.5" stroke="#e6e6e6" stroke-width="1.8" fill="none"/></svg>
<div class="t" style="left:850.80px;top:478.49600000000004px;color:#7baefa;font-size:16px;font-weight:400;letter-spacing:0.423px;-webkit-text-stroke:0.4px #7baefa;">My Character Controller (Script)</div>
<svg style="left:1275px;top:480px;" width="13" height="13" viewBox="0 0 13 13"><circle cx="6.2" cy="6.2" r="6.15" fill="#c8c8c8"/><path d="M4 4.8 Q4 2.5 6.2 2.5 Q8.5 2.5 8.5 4.5 Q8.5 5.7 7.1 6.4 Q6.3 6.8 6.3 8" stroke="#3e3e3e" stroke-width="1.8" fill="none"/><circle cx="6.3" cy="10" r="1.1" fill="#3e3e3e"/></svg>
<svg style="left:1300px;top:480px;" width="13" height="13" viewBox="0 0 13 13"><path d="M0 3 H12.5 M0 9.5 H12.5" stroke="#c4c4c4" stroke-width="1.5"/><rect x="7" y="0" width="2.6" height="6" rx="1" fill="#c4c4c4"/><rect x="3" y="6.5" width="2.6" height="6.5" rx="1" fill="#c4c4c4"/></svg>
<svg style="left:1328px;top:479.5px;" width="6" height="14" viewBox="0 0 6 14"><circle cx="3" cy="1.5" r="1.75" fill="#c4c4c4"/><circle cx="3" cy="6" r="1.75" fill="#c4c4c4"/><circle cx="3" cy="10.5" r="1.75" fill="#c4c4c4"/></svg>
<div style="left:918px;top:512px;width:283px;height:30px;background:#585858;border:1px solid #303030;border-radius:4px"></div>
<div class="t" style="left:1003.20px;top:517.996px;color:#d8d8d8;font-size:16px;font-weight:400;letter-spacing:-0.075px;">Add Component</div>
<svg style="left:0px;top:0px;pointer-events:none" width="1347" height="532" viewBox="0 0 1347 532"><line x1="392.5" y1="99.5" x2="776" y2="478.5" stroke="#ec1c24" stroke-width="3.6" stroke-linecap="round"/><path d="M783.5 486 L766.5 479.5 L777 469.5 Z" fill="#ec1c24"/></svg>
</body></html>
